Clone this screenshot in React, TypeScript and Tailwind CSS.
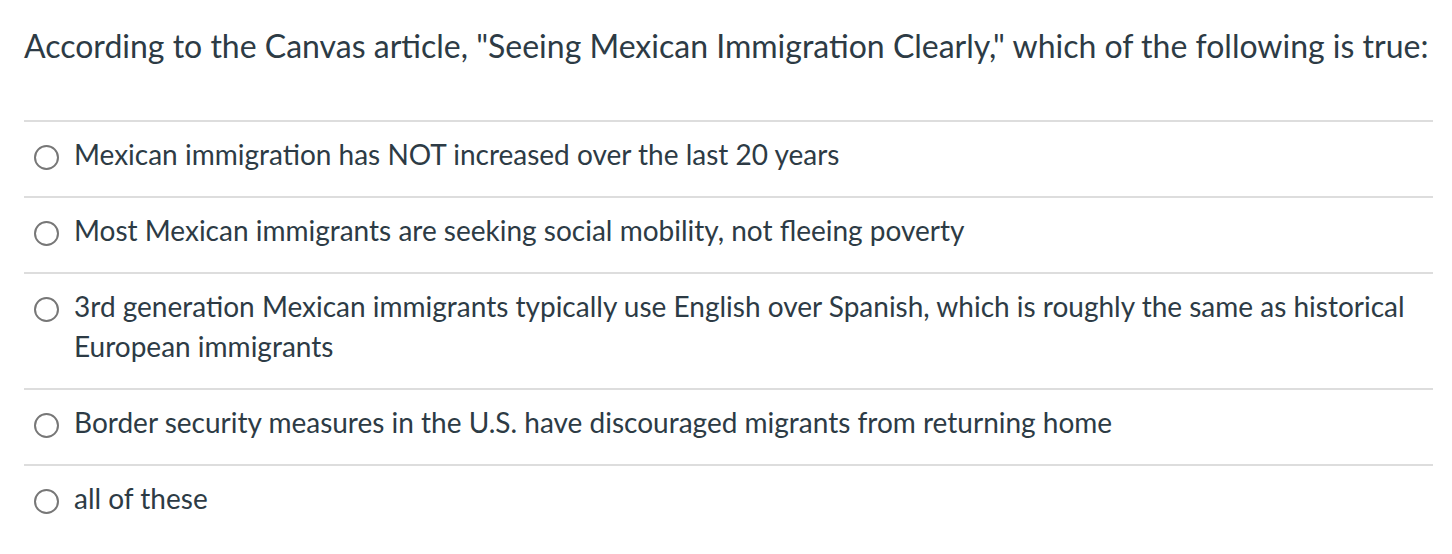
import React from "react";

const answers = [
  "Mexican immigration has NOT increased over the last 20 years",
  "Most Mexican immigrants are seeking social mobility, not fleeing poverty",
  "3rd generation Mexican immigrants typically use English over Spanish, which is roughly the same as historical European immigrants",
  "Border security measures in the U.S. have discouraged migrants from returning home",
  "all of these",
];

export default function App() {
  return (
    <div className="w-[1452px] h-[554px] bg-white text-[#2d3b45] font-['Lato',sans-serif] px-6">
      <h1 className="pt-[26px] pb-[54px] text-[32px] leading-[40px] font-normal whitespace-nowrap">
        According to the Canvas article, "Seeing Mexican Immigration Clearly," which of the following is true:
      </h1>
      <div className="w-[1409px]">
        {answers.map((a, i) => (
          <label key={i} className="flex items-start gap-[15px] border-t-2 border-[#dddddd] pt-[12px] pb-[22px] pl-[10px]">
            <span className="mt-[11px] shrink-0 w-[25px] h-[25px] rounded-full border-2 border-[#777777] bg-white" />
            <span className="text-[28px] leading-[40px] pr-4">{a}</span>
          </label>
        ))}
      </div>
    </div>
  );
}
